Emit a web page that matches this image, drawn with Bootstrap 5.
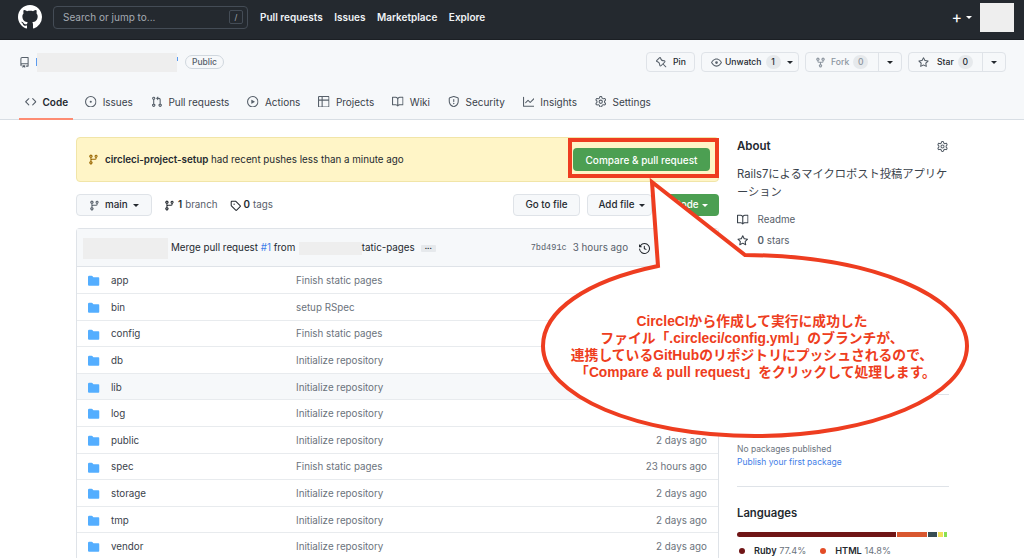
<!DOCTYPE html>
<html lang="ja"><head><meta charset="utf-8"><title>repo</title>
<link rel="stylesheet" href="https://cdn.jsdelivr.net/npm/bootstrap@5.3.0/dist/css/bootstrap.min.css">
<style>
html,body{height:558px;overflow:hidden}
body{font-family:Inter,"Noto Sans CJK JP",sans-serif;font-size:9.8px;color:#24292f;background:#fff;position:relative;line-height:14px}
svg.oc{width:1em;height:1em;fill:currentColor;flex:none;display:block}
a{text-decoration:none;color:inherit}
.topbar{height:40px;background:#24292f;color:#fff;padding:0 10px 5px 18px;border-bottom:1px solid #1b1f24}
.logo{font-size:24px;color:#fff}
.searchbox{width:195px;height:23px;margin-left:11px;border:1px solid #444c56;border-radius:4px;color:#a5abb3;padding:0 4px 0 9px;font-size:10px}
.slashkey{width:14px;height:14px;border:1px solid #444c56;border-radius:2px;font-size:8px;text-align:center;line-height:12px}
.topnav{margin-left:12px;gap:11.5px;font-weight:600;color:#f0f3f6;font-size:10px}
.caret-s{width:0;height:0;border-left:3px solid transparent;border-right:3px solid transparent;border-top:3px solid currentColor;flex:none}
.avatarbox{width:34px;height:29px;background:#eee}
.plusmark{font-size:16px;line-height:1}
.subhead{height:80px;background:#f6f8fa;border-bottom:1px solid #d8dee4;padding:0 18px 0 19px}
.repo-row{height:44px}
.redact{background:#eeeeee;display:inline-block}
.bluesliver{width:1px;height:8px;background:#5b9bef;display:inline-block}
.pillpub{border:1px solid #d0d7de;border-radius:8px;font-size:8.5px;line-height:12px;padding:0 6px;color:#57606a;margin-left:7px;font-weight:500}
.btnrow{gap:6px}
.ghbtn{height:20px;border:1px solid #dfe3e8;border-radius:4px;background:#f6f8fa;font-size:8.6px;font-weight:500;color:#24292f;padding:0 0 0 9px}
.ghbtn svg{font-size:11px;color:#57606a}
.counter{background:#e6e9ec;border-radius:7px;width:15px;height:14px;line-height:14px;text-align:center;font-size:8.6px;margin-left:4px}
.split{border-left:1px solid #dfe3e8;width:23px;height:100%;margin-left:auto;justify-content:center}
.btnmuted{color:#8c959f}
.btnmuted svg{color:#8c959f}
.tabs{height:35px;gap:18px;padding-left:6px;font-size:10px}
.tabitem{gap:6px;height:35px;position:relative;color:#3a424b}
.tabitem svg{color:#57606a;font-size:11.5px}
.tabactive{font-weight:600;color:#24292f;margin-right:-1px}
.tabactive::after{content:"";position:absolute;left:-6px;right:-5px;bottom:-1px;height:2px;background:#fd8c73}
.maincols{padding:17px 0 0 76px;gap:18px}
.leftcol{width:643px;flex:none}
.rightcol{width:212px;flex:none}
.flashbar{height:45px;background:#fff5c7;border:1px solid #f1e5a8;border-radius:4px;padding:0 8px 0 11px;position:relative;font-size:9.8px}
.flashbar svg{color:#9a6700;font-size:11px}
.greenbtn{background:#4c9f52;color:#fff;border-radius:4px;font-weight:500;height:23px;width:137px;font-size:10px;justify-content:center}
.redbox{position:absolute;left:491px;top:0;width:151px;height:40px;border:4px solid #ee3d20}
.branchrow{height:22px;margin-top:12px}
.whitebtn{height:22px;border:1px solid #dfe3e8;border-radius:4px;background:#f6f8fa;font-weight:500;padding:0 12px;gap:4px;white-space:nowrap;justify-content:center}
.mainbtn{width:76px;gap:5px;justify-content:flex-start}
.addbtn{width:65px;margin-left:7px;padding-left:16px}
.codebtn{height:22px;width:62px;margin-left:5px;background:#4c9f52;color:#fff;border-radius:4px;font-weight:500;gap:4px;justify-content:center;padding-left:6px}
.statlink{color:#57606a;gap:3px}
.statlink b{color:#24292f;font-weight:600}
.filebox{border:1px solid #dfe3e8;border-bottom:0;border-radius:4px 4px 0 0;margin-top:12px}
.commithead{height:38.4px;background:#f6f8fa;padding:1px 8px 0 6px;border-bottom:1px solid #dfe3e8}
.dotsbox{background:#e6e9ec;border-radius:1px;height:7px;line-height:3px;width:15px;text-align:center;font-size:7px;margin-left:6px;font-weight:700}
.hashtext{font-size:8.6px;color:#57606a;font-family:"Liberation Mono",monospace}
.frow{height:26.6px;border-bottom:1px solid #e8ebee;padding:2px 11px 0}
.frow svg{color:#54aeff;font-size:11.5px}
.fname{width:185px;margin-left:11.5px;flex:none;color:#3a424b}
.fmsg{color:#6b737c;flex:1}
.ftime{color:#6b737c}
.abouthead{font-size:11.5px;font-weight:600;line-height:18px}
.abouttext{font-size:11.25px;line-height:18px;margin-top:10px;color:#3a424b}
.metarow{gap:9px;color:#57606a;height:21px}
.metarow svg{font-size:11.5px;color:#3a424b}
.sidehr{border-top:1px solid #dfe3e8;margin:0;opacity:1}
.nopkgs{color:#6b737c;font-size:8.5px;line-height:13px}
.linkblue{color:#3f7ee8}
.langhead{font-size:11.3px;font-weight:600;margin-top:18px;line-height:16px}
.langbar{height:5px;margin-top:11px;border-radius:3px;overflow:hidden;gap:1px}
.langbar span{display:block;height:100%}
.langrow{margin-top:7px;font-size:9.2px;gap:14px;color:#6b737c;padding-left:2px}
.langrow b{color:#24292f;font-weight:600}
.ldot{width:6px;height:6px;border-radius:50%;margin-right:9px;flex:none}
.callout{position:absolute;left:530px;top:175px;width:450px;height:270px}
.callout svg{position:absolute;left:0;top:0;width:450px;height:270px}
.callouttext{position:absolute;left:0;right:6px;top:138px;text-align:center;color:#ee3d20;font-weight:700;font-size:13.8px;line-height:17px;font-family:"Liberation Sans","Noto Sans CJK JP",sans-serif}
.lastline{padding-left:7px;display:inline-block}
</style></head><body>
<svg width="0" height="0" class="position-absolute"><defs>
<symbol id="i-mark" viewBox="0 0 16 16"><path d="M8 0C3.58 0 0 3.58 0 8c0 3.54 2.29 6.53 5.47 7.59.4.07.55-.17.55-.38 0-.19-.01-.82-.01-1.49-2.01.37-2.53-.49-2.69-.94-.09-.23-.48-.94-.82-1.13-.28-.15-.68-.52-.01-.53.63-.01 1.08.58 1.23.82.72 1.21 1.87.87 2.33.66.07-.52.28-.87.51-1.07-1.78-.2-3.64-.89-3.64-3.95 0-.87.31-1.59.82-2.15-.08-.2-.36-1.02.08-2.12 0 0 .67-.21 2.2.82.64-.18 1.32-.27 2-.27.68 0 1.36.09 2 .27 1.53-1.04 2.2-.82 2.2-.82.44 1.1.16 1.92.08 2.12.51.56.82 1.27.82 2.15 0 3.07-1.87 3.75-3.65 3.95.29.25.54.73.54 1.48 0 1.07-.01 1.93-.01 2.2 0 .21.15.46.55.38A8.013 8.013 0 0016 8c0-4.42-3.58-8-8-8z"/></symbol>
<symbol id="i-repo" viewBox="0 0 16 16"><path fill-rule="evenodd" d="M2 2.5A2.5 2.5 0 014.5 0h8.75a.75.75 0 01.75.75v12.5a.75.75 0 01-.75.75h-2.5a.75.75 0 110-1.5h1.75v-2h-8a1 1 0 00-.714 1.7.75.75 0 01-1.072 1.05A2.495 2.495 0 012 11.5v-9zm10.5-1V9h-8c-.356 0-.694.074-1 .208V2.5a1 1 0 011-1h8zM5 12.25v3.25a.25.25 0 00.4.2l1.45-1.087a.25.25 0 01.3 0L8.6 15.7a.25.25 0 00.4-.2v-3.25a.25.25 0 00-.25-.25h-3.5a.25.25 0 00-.25.25z"/></symbol>
<symbol id="i-code" viewBox="0 0 16 16"><path d="M4.72 3.22a.75.75 0 011.06 1.06L2.06 8l3.72 3.72a.75.75 0 11-1.06 1.06L.47 8.53a.75.75 0 010-1.06l4.25-4.25zm6.56 0a.75.75 0 10-1.06 1.06L13.94 8l-3.72 3.72a.75.75 0 101.06 1.06l4.25-4.25a.75.75 0 000-1.06l-4.25-4.25z"/></symbol>
<symbol id="i-issue" viewBox="0 0 16 16"><path d="M8 9.5a1.5 1.5 0 100-3 1.5 1.5 0 000 3z"/><path fill-rule="evenodd" d="M8 0a8 8 0 100 16A8 8 0 008 0zM1.5 8a6.5 6.5 0 1113 0 6.5 6.5 0 01-13 0z"/></symbol>
<symbol id="i-pr" viewBox="0 0 16 16"><path fill-rule="evenodd" d="M7.177 3.073L9.573.677A.25.25 0 0110 .854v4.792a.25.25 0 01-.427.177L7.177 3.427a.25.25 0 010-.354zM3.75 2.5a.75.75 0 100 1.5.75.75 0 000-1.5zm-2.25.75a2.25 2.25 0 113 2.122v5.256a2.251 2.251 0 11-1.5 0V5.372A2.25 2.25 0 011.5 3.25zM11 2.5h-1V4h1a1 1 0 011 1v5.628a2.251 2.251 0 101.5 0V5A2.5 2.5 0 0011 2.5zm1 10.25a.75.75 0 111.5 0 .75.75 0 01-1.5 0zM3.75 12a.75.75 0 100 1.5.75.75 0 000-1.5z"/></symbol>
<symbol id="i-play" viewBox="0 0 16 16"><path fill-rule="evenodd" d="M1.5 8a6.5 6.5 0 1113 0 6.5 6.5 0 01-13 0zM8 0a8 8 0 100 16A8 8 0 008 0zM6.379 5.227A.25.25 0 006 5.442v5.117a.25.25 0 00.379.214l4.264-2.559a.25.25 0 000-.428L6.379 5.227z"/></symbol>
<symbol id="i-table" viewBox="0 0 16 16"><path fill-rule="evenodd" d="M0 1.75C0 .784.784 0 1.75 0h12.5C15.216 0 16 .784 16 1.75v12.5A1.75 1.75 0 0114.25 16H1.75A1.75 1.75 0 010 14.25V1.75zM1.5 6.5v7.75c0 .138.112.25.25.25H5v-8H1.5zM5 5H1.5V1.75a.25.25 0 01.25-.25H5V5zm1.5 1.5v8h7.75a.25.25 0 00.25-.25V6.5h-8zm8-1.5h-8V1.5h7.75a.25.25 0 01.25.25V5z"/></symbol>
<symbol id="i-book" viewBox="0 0 16 16"><path fill-rule="evenodd" d="M0 1.75A.75.75 0 01.75 1h4.253c1.227 0 2.317.59 3 1.501A3.744 3.744 0 0111.006 1h4.245a.75.75 0 01.75.75v10.5a.75.75 0 01-.75.75h-4.507a2.25 2.25 0 00-1.591.659l-.622.621a.75.75 0 01-1.06 0l-.622-.621A2.25 2.25 0 005.258 13H.75a.75.75 0 01-.75-.75V1.75zm8.755 3a2.25 2.25 0 012.25-2.25H14.5v9h-3.757c-.71 0-1.4.201-1.992.572l.004-7.322zm-1.504 7.324l.004-5.073-.002-2.253A2.25 2.25 0 005.003 2.5H1.5v9h3.757a3.75 3.75 0 011.994.574z"/></symbol>
<symbol id="i-shield" viewBox="0 0 16 16"><path fill-rule="evenodd" d="M7.467.133a1.75 1.75 0 011.066 0l5.25 1.68A1.75 1.75 0 0115 3.48V7c0 1.566-.32 3.182-1.303 4.682-.983 1.498-2.585 2.813-5.032 3.855a1.7 1.7 0 01-1.33 0c-2.447-1.042-4.049-2.357-5.032-3.855C1.32 10.182 1 8.566 1 7V3.48a1.75 1.75 0 011.217-1.667l5.25-1.68zm.61 1.429a.25.25 0 00-.153 0l-5.25 1.68a.25.25 0 00-.174.238V7c0 1.358.275 2.666 1.057 3.86.784 1.194 2.121 2.34 4.366 3.297a.2.2 0 00.154 0c2.245-.956 3.582-2.104 4.366-3.298C13.225 9.666 13.5 8.36 13.5 7V3.48a.25.25 0 00-.174-.237l-5.25-1.68zM9 10.5a1 1 0 11-2 0 1 1 0 012 0zm-.25-5.75a.75.75 0 10-1.5 0v3a.75.75 0 001.5 0v-3z"/></symbol>
<symbol id="i-graph" viewBox="0 0 16 16"><path d="M1.5 1.75a.75.75 0 00-1.5 0v12.5c0 .414.336.75.75.75h14.5a.75.75 0 000-1.5H1.5V1.75zm14.28 2.53a.75.75 0 00-1.06-1.06L10 7.94 7.53 5.47a.75.75 0 00-1.06 0L3.22 8.72a.75.75 0 001.06 1.06L7 7.06l2.47 2.47a.75.75 0 001.06 0l5.25-5.25z"/></symbol>
<symbol id="i-gear" viewBox="0 0 16 16"><path fill-rule="evenodd" d="M7.429 1.525a6.593 6.593 0 011.142 0c.036.003.108.036.137.146l.289 1.105c.147.56.55.967.997 1.189.174.086.341.183.501.29.417.278.97.423 1.53.27l1.102-.303c.11-.03.175.016.195.046.219.31.41.641.573.989.014.031.022.11-.059.19l-.815.806c-.411.406-.562.957-.53 1.456a4.588 4.588 0 010 .582c-.032.499.119 1.05.53 1.456l.815.806c.08.08.073.159.059.19a6.494 6.494 0 01-.573.99c-.02.029-.086.074-.195.045l-1.103-.303c-.559-.153-1.112-.008-1.529.27-.16.107-.327.204-.5.29-.449.222-.851.628-.998 1.189l-.289 1.105c-.029.11-.101.143-.137.146a6.613 6.613 0 01-1.142 0c-.036-.003-.108-.037-.137-.146l-.289-1.105c-.147-.56-.55-.967-.997-1.189a4.502 4.502 0 01-.501-.29c-.417-.278-.97-.423-1.53-.27l-1.102.303c-.11.03-.175-.016-.195-.046a6.492 6.492 0 01-.573-.989c-.014-.031-.022-.11.059-.19l.815-.806c.411-.406.562-.957.53-1.456a4.587 4.587 0 010-.582c.032-.499-.119-1.05-.53-1.456l-.815-.806c-.08-.08-.073-.159-.059-.19a6.44 6.44 0 01.573-.99c.02-.029.086-.075.195-.045l1.103.303c.559.153 1.112.008 1.529-.27.16-.107.327-.204.5-.29.449-.222.851-.628.998-1.189l.289-1.105c.029-.11.101-.143.137-.146zM8 0c-.236 0-.47.01-.701.03-.743.065-1.29.615-1.458 1.261l-.29 1.106c-.017.066-.078.158-.211.224a5.994 5.994 0 00-.668.386c-.123.082-.233.09-.3.071L3.27 2.776c-.644-.177-1.392.02-1.82.63a7.977 7.977 0 00-.704 1.217c-.315.675-.111 1.422.363 1.891l.815.806c.05.048.098.147.088.294a6.084 6.084 0 000 .772c.01.147-.038.246-.088.294l-.815.806c-.474.469-.678 1.216-.363 1.891.2.428.436.835.704 1.218.428.609 1.176.806 1.82.63l1.103-.303c.066-.019.176-.011.299.071.213.143.436.272.668.386.133.066.194.158.212.224l.289 1.106c.169.646.715 1.196 1.458 1.26a8.094 8.094 0 001.402 0c.743-.064 1.29-.614 1.458-1.26l.29-1.106c.017-.066.078-.158.211-.224a5.98 5.98 0 00.668-.386c.123-.082.233-.09.3-.071l1.102.302c.644.177 1.392-.02 1.82-.63.268-.382.505-.789.704-1.217.315-.675.111-1.422-.364-1.891l-.814-.806c-.05-.048-.098-.147-.088-.294a6.1 6.1 0 000-.772c-.01-.147.039-.246.088-.294l.814-.806c.475-.469.679-1.216.364-1.891a7.992 7.992 0 00-.704-1.218c-.428-.609-1.176-.806-1.82-.63l-1.103.303c-.066.019-.176.011-.299-.071a5.991 5.991 0 00-.668-.386c-.133-.066-.194-.158-.212-.224L10.16 1.29C9.99.645 9.444.095 8.701.031A8.094 8.094 0 008 0zm1.5 8a1.5 1.5 0 11-3 0 1.5 1.5 0 013 0zM11 8a3 3 0 11-6 0 3 3 0 016 0z"/></symbol>
<symbol id="i-branch" viewBox="0 0 16 16"><path fill-rule="evenodd" d="M11.75 2.5a.75.75 0 100 1.5.75.75 0 000-1.5zm-2.25.75a2.25 2.25 0 113 2.122V6A2.5 2.5 0 0110 8.5H6a1 1 0 00-1 1v1.128a2.251 2.251 0 11-1.5 0V5.372a2.25 2.25 0 111.5 0v1.836A2.492 2.492 0 016 7h4a1 1 0 001-1v-.628A2.25 2.25 0 019.5 3.25zM4.25 12a.75.75 0 100 1.5.75.75 0 000-1.5zM3.5 3.25a.75.75 0 111.5 0 .75.75 0 01-1.5 0z"/></symbol>
<symbol id="i-tag" viewBox="0 0 16 16"><path fill-rule="evenodd" d="M2.5 7.775V2.75a.25.25 0 01.25-.25h5.025a.25.25 0 01.177.073l6.25 6.25a.25.25 0 010 .354l-5.025 5.025a.25.25 0 01-.354 0l-6.25-6.25a.25.25 0 01-.073-.177zm-1.5 0V2.75C1 1.784 1.784 1 2.75 1h5.025c.464 0 .91.184 1.238.513l6.25 6.25a1.75 1.75 0 010 2.474l-5.026 5.026a1.75 1.75 0 01-2.474 0l-6.25-6.25A1.75 1.75 0 011 7.775zM6 5a1 1 0 100 2 1 1 0 000-2z"/></symbol>
<symbol id="i-eye" viewBox="0 0 16 16"><path fill-rule="evenodd" d="M1.679 7.932c.412-.621 1.242-1.75 2.366-2.717C5.175 4.242 6.527 3.5 8 3.5c1.473 0 2.824.742 3.955 1.715 1.124.967 1.954 2.096 2.366 2.717a.119.119 0 010 .136c-.412.621-1.242 1.75-2.366 2.717C10.825 11.758 9.473 12.5 8 12.5c-1.473 0-2.824-.742-3.955-1.715C2.92 9.818 2.09 8.69 1.679 8.068a.119.119 0 010-.136zM8 2c-1.981 0-3.67.992-4.933 2.078C1.797 5.169.88 6.423.43 7.1a1.619 1.619 0 000 1.798c.45.678 1.367 1.932 2.637 3.024C4.329 13.008 6.019 14 8 14c1.981 0 3.67-.992 4.933-2.078 1.27-1.091 2.187-2.345 2.637-3.023a1.619 1.619 0 000-1.798c-.45-.678-1.367-1.932-2.637-3.023C11.671 2.992 9.981 2 8 2zm0 8a2 2 0 100-4 2 2 0 000 4z"/></symbol>
<symbol id="i-fork" viewBox="0 0 16 16"><path fill-rule="evenodd" d="M5 3.25a.75.75 0 11-1.5 0 .75.75 0 011.5 0zm0 2.122a2.25 2.25 0 10-1.5 0v.878A2.25 2.25 0 005.75 8.5h1.5v2.128a2.251 2.251 0 101.5 0V8.5h1.5a2.25 2.25 0 002.25-2.25v-.878a2.25 2.25 0 10-1.5 0v.878a.75.75 0 01-.75.75h-4.5A.75.75 0 015 6.25v-.878zm3.75 7.378a.75.75 0 11-1.5 0 .75.75 0 011.5 0zm3-8.75a.75.75 0 100-1.5.75.75 0 000 1.5z"/></symbol>
<symbol id="i-star" viewBox="0 0 16 16"><path fill-rule="evenodd" d="M8 .25a.75.75 0 01.673.418l1.882 3.815 4.21.612a.75.75 0 01.416 1.279l-3.046 2.97.719 4.192a.75.75 0 01-1.088.791L8 12.347l-3.766 1.98a.75.75 0 01-1.088-.79l.72-4.194L.818 6.374a.75.75 0 01.416-1.28l4.21-.611L7.327.668A.75.75 0 018 .25zm0 2.445L6.615 5.5a.75.75 0 01-.564.41l-3.097.45 2.24 2.184a.75.75 0 01.216.664l-.528 3.084 2.769-1.456a.75.75 0 01.698 0l2.77 1.456-.53-3.084a.75.75 0 01.216-.664l2.24-2.183-3.096-.45a.75.75 0 01-.564-.41L8 2.694v.001z"/></symbol>
<symbol id="i-pin" viewBox="0 0 16 16"><path fill-rule="evenodd" d="M4.456.734a1.75 1.75 0 012.826.504l.613 1.327a3.081 3.081 0 002.084 1.707l2.454.584c1.332.317 1.8 1.972.832 2.94L11.06 10l3.72 3.72a.75.75 0 11-1.061 1.06L10 11.06l-2.204 2.205c-.968.968-2.623.5-2.94-.832l-.584-2.454a3.081 3.081 0 00-1.707-2.084l-1.327-.613a1.75 1.75 0 01-.504-2.826L4.456.734zM5.92 1.866a.25.25 0 00-.404-.072L1.794 5.516a.25.25 0 00.072.404l1.328.613A4.582 4.582 0 015.73 9.63l.584 2.454a.25.25 0 00.42.12l5.47-5.47a.25.25 0 00-.12-.42L9.63 6.13a4.581 4.581 0 01-3.098-2.537L5.92 1.866z"/></symbol>
<symbol id="i-history" viewBox="0 0 16 16"><path fill-rule="evenodd" d="M1.643 3.143L.427 1.927A.25.25 0 000 2.104V5.75c0 .138.112.25.25.25h3.646a.25.25 0 00.177-.427L2.715 4.215a6.5 6.5 0 11-1.18 4.458.75.75 0 10-1.493.154 8.001 8.001 0 101.6-5.684zM7.75 4a.75.75 0 01.75.75v2.992l2.028.812a.75.75 0 01-.557 1.392l-2.5-1A.75.75 0 017 8.25v-3.5A.75.75 0 017.75 4z"/></symbol>
<symbol id="i-folder" viewBox="0 0 16 16"><path d="M1.75 1A1.75 1.75 0 000 2.75v10.5C0 14.216.784 15 1.75 15h12.5A1.75 1.75 0 0016 13.25v-8.5A1.75 1.75 0 0014.25 3H7.5a.25.25 0 01-.2-.1l-.9-1.2C6.07 1.26 5.55 1 5 1H1.75z"/></symbol>
</defs></svg>

<header class="topbar d-flex align-items-center">
  <a class="logo" href="#"><svg class="oc"><use href="#i-mark"/></svg></a>
  <div class="searchbox d-flex align-items-center justify-content-between"><span>Search or jump to...</span><span class="slashkey">/</span></div>
  <nav class="topnav d-flex"><a href="#">Pull requests</a><a href="#">Issues</a><a href="#">Marketplace</a><a href="#">Explore</a></nav>
  <div class="ms-auto d-flex align-items-center gap-1">
    <span class="plusmark text-white">+</span><span class="caret-s"></span>
    <span class="avatarbox ms-1"></span>
  </div>
</header>

<section class="subhead">
  <div class="repo-row d-flex align-items-center justify-content-between">
    <div class="d-flex align-items-center">
      <svg class="oc" style="font-size:11px;color:#57606a"><use href="#i-repo"/></svg>
      <span class="bluesliver" style="margin-left:6px"></span><span class="redact" style="width:140px;height:19px"></span><span class="bluesliver" style="height:4px;margin-bottom:6px"></span>
      <span class="pillpub">Public</span>
    </div>
    <div class="btnrow d-flex">
      <a class="ghbtn d-flex align-items-center" href="#" style="width:49px"><svg class="oc"><use href="#i-pin"/></svg><span style="margin-left:6px">Pin</span></a>
      <a class="ghbtn d-flex align-items-center" href="#" style="width:98px"><svg class="oc"><use href="#i-eye"/></svg><span style="margin-left:3px">Unwatch</span><span class="counter">1</span><span class="caret-s" style="margin-left:6px"></span></a>
      <a class="ghbtn btnmuted d-flex align-items-center" href="#" style="width:97px"><svg class="oc"><use href="#i-fork"/></svg><span style="margin-left:5px">Fork</span><span class="counter">0</span><span class="split d-flex align-items-center"><span class="caret-s text-body"></span></span></a>
      <a class="ghbtn d-flex align-items-center" href="#" style="width:98px"><svg class="oc"><use href="#i-star"/></svg><span style="margin-left:8px">Star</span><span class="counter">0</span><span class="split d-flex align-items-center"><span class="caret-s"></span></span></a>
    </div>
  </div>
  <nav class="tabs d-flex align-items-center">
    <a class="tabitem tabactive d-flex align-items-center" href="#"><svg class="oc"><use href="#i-code"/></svg>Code</a>
    <a class="tabitem d-flex align-items-center" href="#"><svg class="oc"><use href="#i-issue"/></svg>Issues</a>
    <a class="tabitem d-flex align-items-center" href="#"><svg class="oc"><use href="#i-pr"/></svg>Pull requests</a>
    <a class="tabitem d-flex align-items-center" href="#"><svg class="oc"><use href="#i-play"/></svg>Actions</a>
    <a class="tabitem d-flex align-items-center" href="#"><svg class="oc"><use href="#i-table"/></svg>Projects</a>
    <a class="tabitem d-flex align-items-center" href="#"><svg class="oc"><use href="#i-book"/></svg>Wiki</a>
    <a class="tabitem d-flex align-items-center" href="#"><svg class="oc"><use href="#i-shield"/></svg>Security</a>
    <a class="tabitem d-flex align-items-center" href="#"><svg class="oc"><use href="#i-graph"/></svg>Insights</a>
    <a class="tabitem d-flex align-items-center" href="#"><svg class="oc"><use href="#i-gear"/></svg>Settings</a>
  </nav>
</section>

<main class="maincols d-flex">
  <div class="leftcol">
    <div class="flashbar d-flex align-items-center justify-content-between">
      <div class="d-flex align-items-center" style="gap:6px"><svg class="oc"><use href="#i-branch"/></svg><span><b class="fw-semibold">circleci-project-setup</b> had recent pushes less than a minute ago</span></div>
      <a class="greenbtn d-flex align-items-center" href="#">Compare &amp; pull request</a>
      <span class="redbox"></span>
    </div>
    <div class="branchrow d-flex align-items-center">
      <a class="whitebtn mainbtn d-flex align-items-center" href="#"><svg class="oc" style="font-size:11px;color:#57606a"><use href="#i-branch"/></svg><span>main</span><span class="caret-s"></span></a>
      <a class="statlink d-flex align-items-center" href="#" style="margin-left:12px"><svg class="oc" style="font-size:11px;color:#24292f"><use href="#i-branch"/></svg><b>1</b> branch</a>
      <a class="statlink d-flex align-items-center" href="#" style="margin-left:12px"><svg class="oc" style="font-size:11px;color:#24292f"><use href="#i-tag"/></svg><b>0</b> tags</a>
      <a class="whitebtn d-flex align-items-center ms-auto" href="#" style="width:67px">Go to file</a>
      <a class="whitebtn addbtn d-flex align-items-center" href="#">Add file<span class="caret-s"></span></a>
      <a class="codebtn d-flex align-items-center" href="#">Code<span class="caret-s"></span></a>
    </div>
    <div class="filebox">
      <div class="commithead d-flex align-items-center">
        <span class="redact" style="width:85px;height:21px;margin-right:3px"></span>
        <span>Merge pull request <a class="linkblue" href="#">#1</a> from </span>
        <span class="redact" style="width:63px;height:13px;margin-left:3.5px"></span>
        <span>tatic-pages</span><span class="dotsbox">...</span>
        <span class="ms-auto hashtext">7bd491c</span>
        <span class="ftime" style="margin-left:6px;color:#57606a">3 hours ago</span>
        <svg class="oc" style="font-size:11px;margin-left:11px;margin-right:60px"><use href="#i-history"/></svg>
      </div>
      <div class="frow d-flex align-items-center"><svg class="oc"><use href="#i-folder"/></svg><span class="fname">app</span><span class="fmsg">Finish static pages</span></div>
      <div class="frow d-flex align-items-center"><svg class="oc"><use href="#i-folder"/></svg><span class="fname">bin</span><span class="fmsg">setup RSpec</span></div>
      <div class="frow d-flex align-items-center"><svg class="oc"><use href="#i-folder"/></svg><span class="fname">config</span><span class="fmsg">Finish static pages</span></div>
      <div class="frow d-flex align-items-center"><svg class="oc"><use href="#i-folder"/></svg><span class="fname">db</span><span class="fmsg">Initialize repository</span></div>
      <div class="frow d-flex align-items-center" style="background:#f6f8fa"><svg class="oc"><use href="#i-folder"/></svg><span class="fname">lib</span><span class="fmsg">Initialize repository</span></div>
      <div class="frow d-flex align-items-center"><svg class="oc"><use href="#i-folder"/></svg><span class="fname">log</span><span class="fmsg">Initialize repository</span><span class="ftime">2 days ago</span></div>
      <div class="frow d-flex align-items-center"><svg class="oc"><use href="#i-folder"/></svg><span class="fname">public</span><span class="fmsg">Initialize repository</span><span class="ftime">2 days ago</span></div>
      <div class="frow d-flex align-items-center"><svg class="oc"><use href="#i-folder"/></svg><span class="fname">spec</span><span class="fmsg">Finish static pages</span><span class="ftime">23 hours ago</span></div>
      <div class="frow d-flex align-items-center"><svg class="oc"><use href="#i-folder"/></svg><span class="fname">storage</span><span class="fmsg">Initialize repository</span><span class="ftime">2 days ago</span></div>
      <div class="frow d-flex align-items-center"><svg class="oc"><use href="#i-folder"/></svg><span class="fname">tmp</span><span class="fmsg">Initialize repository</span><span class="ftime">2 days ago</span></div>
      <div class="frow d-flex align-items-center"><svg class="oc"><use href="#i-folder"/></svg><span class="fname">vendor</span><span class="fmsg">Initialize repository</span><span class="ftime">2 days ago</span></div>
    </div>
  </div>
  <aside class="rightcol">
    <div class="d-flex align-items-center justify-content-between abouthead"><span>About</span><svg class="oc" style="font-size:11px;color:#57606a;margin-right:1px"><use href="#i-gear"/></svg></div>
    <p class="abouttext mb-0">Rails7によるマイクロポスト投稿アプリケーション</p>
    <div class="metarow d-flex align-items-center" style="margin-top:8px"><svg class="oc"><use href="#i-book"/></svg>Readme</div>
    <div class="metarow d-flex align-items-center"><svg class="oc"><use href="#i-star"/></svg><span><b class="fw-semibold">0</b> stars</span></div>
    <hr class="sidehr" style="margin-top:143px">
    <div class="nopkgs" style="margin-top:48px">No packages published</div>
    <a class="linkblue d-block nopkgs" href="#">Publish your first package</a>
    <hr class="sidehr" style="margin-top:17px">
    <div class="langhead">Languages</div>
    <div class="langbar d-flex">
      <span style="width:74.8%;background:#701516"></span><span style="width:14.2%;background:#d9572f"></span><span style="width:4.4%;background:#384d54"></span><span style="width:2.6%;background:#f1e05a"></span><span style="width:1.4%;background:#89e051"></span>
    </div>
    <div class="langrow d-flex">
      <span class="d-flex align-items-center"><span class="ldot" style="background:#701516"></span><b>Ruby</b>&nbsp;77.4%</span>
      <span class="d-flex align-items-center"><span class="ldot" style="background:#e34c26"></span><b>HTML</b>&nbsp;14.8%</span>
    </div>
  </aside>
</main>

<div class="callout">
  <svg viewBox="0 0 450 270"><path d="M122 7 L128 91 C56 106 13 136 13 171 C13 221 108 261 225 261 C342 261 437 221 437 171 C437 121 342 81 215 80 Z" fill="#fff" stroke="#ee3d20" stroke-width="4"/></svg>
  <div class="callouttext">CircleCIから作成して実行に成功した<br>ファイル「.circleci/config.yml」のブランチが、<br>連携しているGitHubのリポジトリにプッシュされるので、<br><span class="lastline">「Compare &amp; pull request」をクリックして処理します。</span></div>
</div>
</body></html>
